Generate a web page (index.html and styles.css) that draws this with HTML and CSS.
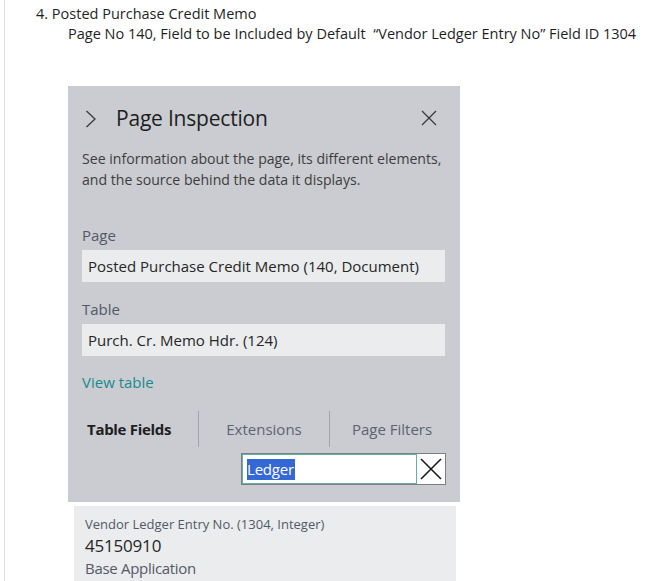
FILE: index.html
```html
<!DOCTYPE html>
<html>
<head>
<meta charset="utf-8">
<link rel="stylesheet" href="styles.css">
</head>
<body>
<div class="doc">
  <p class="item">4. Posted Purchase Credit Memo</p>
  <p class="sub">Page No 140, Field to be Included by Default&nbsp; “Vendor Ledger Entry No” Field ID 1304</p>

  <div class="panel">
    <div class="head">
      <svg class="chev" width="12" height="18" viewBox="0 0 12 18"><path d="M1.5 1 L10 9 L1.5 17" fill="none" stroke="#3a3a3a" stroke-width="1.3"/></svg>
      <span class="title">Page Inspection</span>
      <svg class="close" width="16" height="16" viewBox="0 0 16 16"><path d="M1 1 L15 15 M15 1 L1 15" fill="none" stroke="#3a3a3a" stroke-width="1.3"/></svg>
    </div>
    <p class="desc">See information about the page, its different elements, and the source behind the data it displays.</p>

    <div class="label">Page</div>
    <div class="field">Posted Purchase Credit Memo (140, Document)</div>

    <div class="label">Table</div>
    <div class="field">Purch. Cr. Memo Hdr. (124)</div>

    <div class="link">View table</div>

    <div class="tabs">
      <div class="tab active">Table Fields</div>
      <div class="tab">Extensions</div>
      <div class="tab">Page Filters</div>
    </div>

    <div class="searchrow">
      <div class="search">
        <div class="input"><span class="sel">Ledger</span></div>
        <div class="clear">
          <svg width="22" height="22" viewBox="0 0 22 22"><path d="M1 1 L21 21 M21 1 L1 21" fill="none" stroke="#1a1a1a" stroke-width="1.6"/></svg>
        </div>
      </div>
    </div>
  </div>

  <div class="results">
    <div class="card">
      <div class="fname">Vendor Ledger Entry No. (1304, Integer)</div>
      <div class="fval">45150910</div>
      <div class="fsrc">Base Application</div>
    </div>
  </div>
</div>
</body>
</html>
```

FILE: styles.css
```css
html, body {
  margin: 0;
  padding: 0;
  background: #ffffff;
}
body {
  font-family: "Open Sans", "Noto Sans", sans-serif;
  color: #262626;
}
.doc {
  margin-left: 4px;
  border-left: 1px solid #dedede;
  min-height: 581px;
  overflow: hidden;
}
.item {
  margin: 4px 0 0 31px;
  font-size: 14.5px;
  line-height: 20px;
  color: #1f1f1f;
}
.sub {
  margin: 0 0 0 63px;
  font-size: 14.5px;
  line-height: 20px;
  color: #1f1f1f;
  white-space: nowrap;
}
.panel {
  margin: 42px 0 0 63px;
  width: 392px;
  background: #caccd1;
  padding: 0 15px 17px 14px;
  box-sizing: border-box;
}
.head {
  display: flex;
  align-items: center;
  height: 64px;
}
.chev {
  margin-left: 3px;
  margin-top: 1px;
}
.title {
  margin-left: 19px;
  font-size: 21px;
  color: #1e1e1e;
  flex: 1;
  letter-spacing: -0.2px;
}
.close {
  margin-right: 8px;
}
.desc {
  margin: -2px 0 0;
  font-size: 14.1px;
  line-height: 21px;
  color: #3d3d3d;
}
.label {
  margin-top: 35px;
  font-size: 15px;
  line-height: 20px;
  color: #505a66;
}
.label + .field {
  margin-top: 5px;
}
.field + .label {
  margin-top: 17px;
}
.field {
  background: #ebecee;
  height: 32px;
  line-height: 32px;
  padding-left: 6px;
  font-size: 15px;
  color: #262626;
}
.link {
  margin-top: 16px;
  font-size: 15px;
  line-height: 20px;
  color: #168c8f;
}
.tabs {
  margin-top: 19px;
  display: flex;
  height: 36px;
  align-items: center;
}
.tab {
  flex-shrink: 0;
  font-size: 15px;
  color: #5b6470;
  height: 36px;
  line-height: 36px;
  text-align: center;
}
.tab:nth-child(1) {
  width: 116px;
  text-align: left;
  padding-left: 5px;
  box-sizing: border-box;
  letter-spacing: -0.3px;
}
.tab:nth-child(2) {
  width: 130px;
  border-left: 1px solid #a2a6ac;
}
.tab:nth-child(3) {
  width: 124px;
  border-left: 1px solid #a2a6ac;
}
.tab.active {
  font-weight: 700;
  color: #1e1e1e;
}
.searchrow {
  display: flex;
  justify-content: flex-end;
  margin-top: 6px;
  margin-right: -1px;
}
.search {
  display: flex;
  width: 205px;
  height: 32px;
  border: 1px solid #7b7e83;
  box-sizing: border-box;
  background: #ffffff;
}
.input {
  flex: 1;
  border: 1px solid #5fb0ae;
  display: flex;
  align-items: center;
  padding-left: 4px;
  font-size: 15px;
  letter-spacing: -0.2px;
}
.sel {
  background: #3468d4;
  color: #ffffff;
  line-height: 21px;
  padding-right: 1px;
}
.clear {
  width: 28px;
  display: flex;
  align-items: center;
  justify-content: center;
  background: #ffffff;
}
.results {
  margin-left: 63px;
  width: 392px;
  padding: 4px 4px 0 6px;
  box-sizing: border-box;
}
.card {
  background: #ebecee;
  padding: 8px 11px 6px;
  height: 90px;
  box-sizing: border-box;
}
.fname {
  font-size: 13px;
  line-height: 20px;
  color: #505a66;
}
.fval {
  font-size: 17px;
  line-height: 24px;
  color: #262626;
  letter-spacing: -0.2px;
}
.fsrc {
  font-size: 15px;
  line-height: 20px;
  color: #505a66;
  letter-spacing: -0.3px;
}
```
